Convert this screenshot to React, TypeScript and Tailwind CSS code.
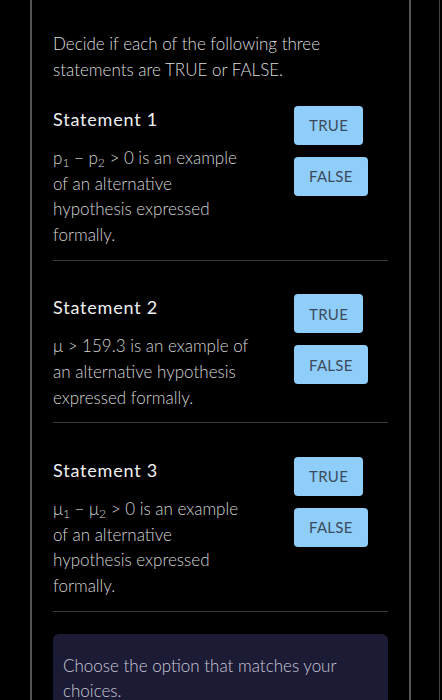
const font = { fontFamily: "Lato, 'Open Sans', sans-serif" };

function Choice({ label }: { label: string }) {
  return (
    <button className="h-[39px] rounded-[4px] bg-[#8fcdfb] px-[15px] text-[15px] tracking-[0.3px] text-[#3c4b5c]">
      {label}
    </button>
  );
}

function Statement({
  title,
  lines,
  pad,
}: {
  title: string;
  lines: React.ReactNode[];
  pad: string;
}) {
  return (
    <div className={`flex justify-between border-b border-[#3a3a3a] ${pad}`}>
      <div>
        <div className="text-[18px] leading-[26px] tracking-[0.8px] text-[#f0f0f0]">{title}</div>
        <div className="mt-[13px] text-[17px] font-light leading-[25.6px] text-[#d4d4d4]">
          {lines.map((l, i) => (
            <div className="whitespace-nowrap" key={i}>
              {l}
            </div>
          ))}
        </div>
      </div>
      <div className="mr-[22px] flex w-[72px] flex-col items-start gap-[12px]">
        <Choice label="TRUE" />
        <Choice label="FALSE" />
      </div>
    </div>
  );
}

export default function App() {
  return (
    <div className="h-[700px] w-[442px] overflow-hidden bg-black" style={font}>
      <div className="flex h-full">
        <div className="ml-[30px] h-full w-[381px] border-x-2 border-[#555] px-[21px]">
          <p className="pt-[31px] text-[17px] font-light leading-[26px] text-[#dcdcdc]">
            Decide if each of the following three
            <br />
            statements are TRUE or FALSE.
          </p>
          <Statement
            pad="pt-[23px] pb-[13px]"
            title="Statement 1"
            lines={[
              <>
                p<sub className="text-[12px]">1</sub> − p<sub className="text-[12px]">2</sub> &gt; 0 is an example
              </>,
              "of an alternative",
              "hypothesis expressed",
              "formally.",
            ]}
          />
          <Statement
            pad="pt-[33px] pb-[12px]"
            title="Statement 2"
            lines={["μ > 159.3 is an example of", "an alternative hypothesis", "expressed formally."]}
          />
          <Statement
            pad="pt-[34px] pb-[12px]"
            title="Statement 3"
            lines={[
              <>
                μ<sub className="text-[12px]">1</sub> − μ<sub className="text-[12px]">2</sub> &gt; 0 is an example
              </>,
              "of an alternative",
              "hypothesis expressed",
              "formally.",
            ]}
          />
          <div className="mt-[22px] rounded-[6px] bg-[#1c1b35] px-[10px] pt-[19px] pb-[10px]">
            <p className="text-[17px] font-light leading-[25.4px] text-[#c9c9d6]">
              Choose the option that matches your
              <br />
              choices.
            </p>
          </div>
        </div>
        <div className="ml-[28px] h-full w-[1px] bg-[#444]" />
      </div>
    </div>
  );
}
